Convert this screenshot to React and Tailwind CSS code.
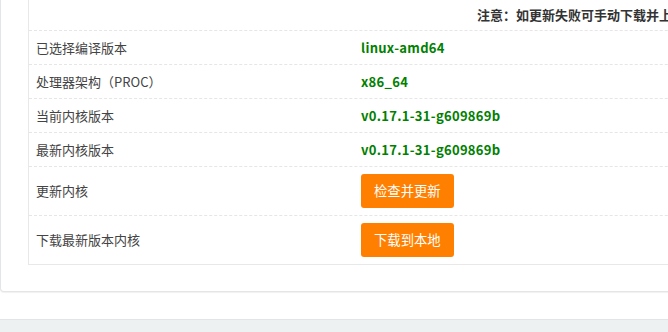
export default function App() {
  const font = { fontFamily: '"Noto Sans CJK SC", "Noto Sans", sans-serif' };
  const rows = [
    ["已选择编译版本", "linux-amd64"],
    ["处理器架构（PROC）", "x86_64"],
    ["当前内核版本", "v0.17.1-31-g609869b"],
    ["最新内核版本", "v0.17.1-31-g609869b"],
  ];
  return (
    <div className="w-[668px] h-[332px] overflow-hidden bg-white text-[13px] text-[#333]" style={font}>
      <div className="h-[319px]">
        <div className="w-[900px] h-[292px] bg-white border border-t-0 border-[#e3e6e8] rounded-b-[4px] shadow-[0_1px_1px_rgba(0,0,0,0.06)] pl-[27px]">
          <div className="w-[860px] border-l border-b border-[#e8e8e8]">
            <div className="h-[30px] flex items-center pl-[448px] font-bold whitespace-nowrap text-[#333]">
              注意：如更新失败可手动下载并上传内核文件至服务器
            </div>
            {rows.map(([l, v]) => (
              <div key={l} className="h-[34px] flex items-center border-t border-dashed border-[#e6e6e6]">
                <div className="w-[325px] pl-[7px] text-[#444]">{l}</div>
                <div className="pl-[7px] font-bold text-[#008000] tracking-[0.3px]">{v}</div>
              </div>
            ))}
            {[["更新内核", "检查并更新"], ["下载最新版本内核", "下载到本地"]].map(([l, b]) => (
              <div key={l} className="h-[49px] flex items-center border-t border-dashed border-[#e6e6e6]">
                <div className="w-[325px] pl-[7px] text-[#444]">{l}</div>
                <div className="pl-[7px]">
                  <button className="h-[34px] px-[13px] rounded-[3px] bg-[#ff7f00] text-white text-[13.33px] leading-none">{b}</button>
                </div>
              </div>
            ))}
          </div>
        </div>
      </div>
      <div className="h-[13px] bg-[#eef1f2] border-t border-[#e2e5e7]"></div>
    </div>
  );
}
